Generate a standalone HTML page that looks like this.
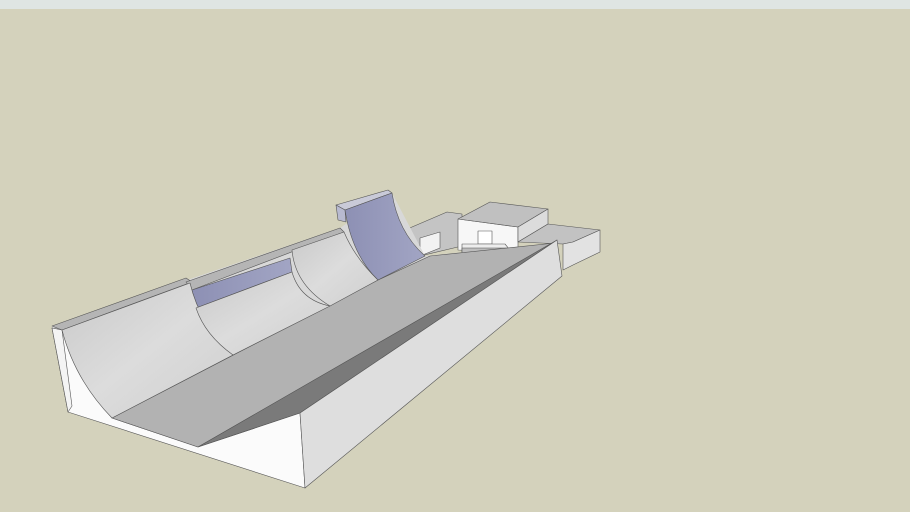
<!DOCTYPE html>
<html><head><style>
html,body{margin:0;padding:0;width:910px;height:512px;overflow:hidden;background:#d4d2bc}
.bar{position:absolute;left:0;top:0;width:910px;height:9px;background:#dfe5e3}
svg{position:absolute;left:0;top:0}
</style></head><body>
<div class="bar"></div>
<svg width="910" height="512" viewBox="0 0 910 512" stroke="#555" stroke-width="0.6" stroke-linejoin="round">
<defs>
<linearGradient id="qp" x1="0" y1="0" x2="1" y2="1"><stop offset="0" stop-color="#c9c9c9"/><stop offset="0.5" stop-color="#dcdcdc"/><stop offset="1" stop-color="#cfcfcf"/></linearGradient>
<linearGradient id="bl" x1="0" y1="0" x2="1" y2="0"><stop offset="0" stop-color="#8d90b4"/><stop offset="1" stop-color="#a2a5c4"/></linearGradient>
</defs>
<!-- back platforms -->
<polygon points="405,230 447,212 462,214 462,246 420,256" fill="#c4c4c4"/>
<polygon points="405,232 420,256 420,262 405,248" fill="#ededed"/>
<polygon points="420,238 440,232 440,248 420,256" fill="#f2f2f2"/>
<polygon points="458,219 518,227 518,252 458,250" fill="#f7f7f7"/>
<polygon points="458,219 490,202 548,209 518,227" fill="#c0c0c0"/>
<polygon points="518,227 548,209 548,224 518,242" fill="#dcdcdc"/>
<polygon points="518,242 548,224 600,230 573,242 563,244" fill="#c2c2c2"/>
<polygon points="563,244 573,242 600,230 600,252 573,265 563,270" fill="#e2e2e2"/>
<polygon points="478,231 492,231 492,244 478,244" fill="#fff"/>
<polygon points="462,244 505,244 510,250 462,252" fill="#ededed"/>
<polygon points="462,248 507,248 507,256 462,256" fill="#bdbdbd"/>
<polygon points="456,254 505,254 505,262 456,262" fill="#ededed"/>
<!-- underlay -->
<polygon points="52,326 340,228 392,193 425,256 555,243 560,278 305,488 68,412" fill="#d8d8d8" stroke="none"/>
<!-- base white floor -->
<polygon points="52,328 68,412 305,488 300,413 198,447 112,418 62,330" fill="#fbfbfb"/>
<!-- left outer wall -->
<polygon points="52,328 62,330 72,406 68,412" fill="#f4f4f4"/>
<!-- mid floor -->
<polygon points="112,418 378,280 430,256 555,243 198,447" fill="#b2b2b2"/>
<!-- dark ramp face -->
<polygon points="198,447 300,413 557,240" fill="#7a7a7a"/>
<!-- right wall -->
<polygon points="300,413 557,240 562,276 305,488" fill="#dedede"/>
<!-- back wall top rail -->
<polygon points="52,326 186,278 192,282 62,330" fill="#b5b5b5"/>
<polygon points="186,282 340,228 344,232 192,290" fill="#b5b5b5"/>
<!-- blue strip -->
<polygon points="192,290 290,258 292,272 196,308" fill="url(#bl)"/>
<!-- QP1 -->
<path d="M62,330 L190,283 Q200,325 233,355 L112,418 Q75,380 62,330 Z" fill="url(#qp)"/>
<!-- QP segment 2 -->
<path d="M196,308 L292,272 Q300,300 330,306 L233,355 Q205,335 196,308 Z" fill="url(#qp)"/>
<!-- QP segment 3 -->
<path d="M292,250 L344,232 Q355,258 378,280 L330,306 Q295,285 292,250 Z" fill="url(#qp)"/>
<!-- blue QP -->
<polygon points="336,205 388,190 392,193 345,210" fill="#c9cad8"/>
<polygon points="336,205 345,210 346,222 338,220" fill="#b8bad0"/>
<path d="M345,210 L392,193 Q398,232 425,256 L378,280 Q352,255 345,210 Z" fill="url(#bl)"/>
</svg>
</body></html>
